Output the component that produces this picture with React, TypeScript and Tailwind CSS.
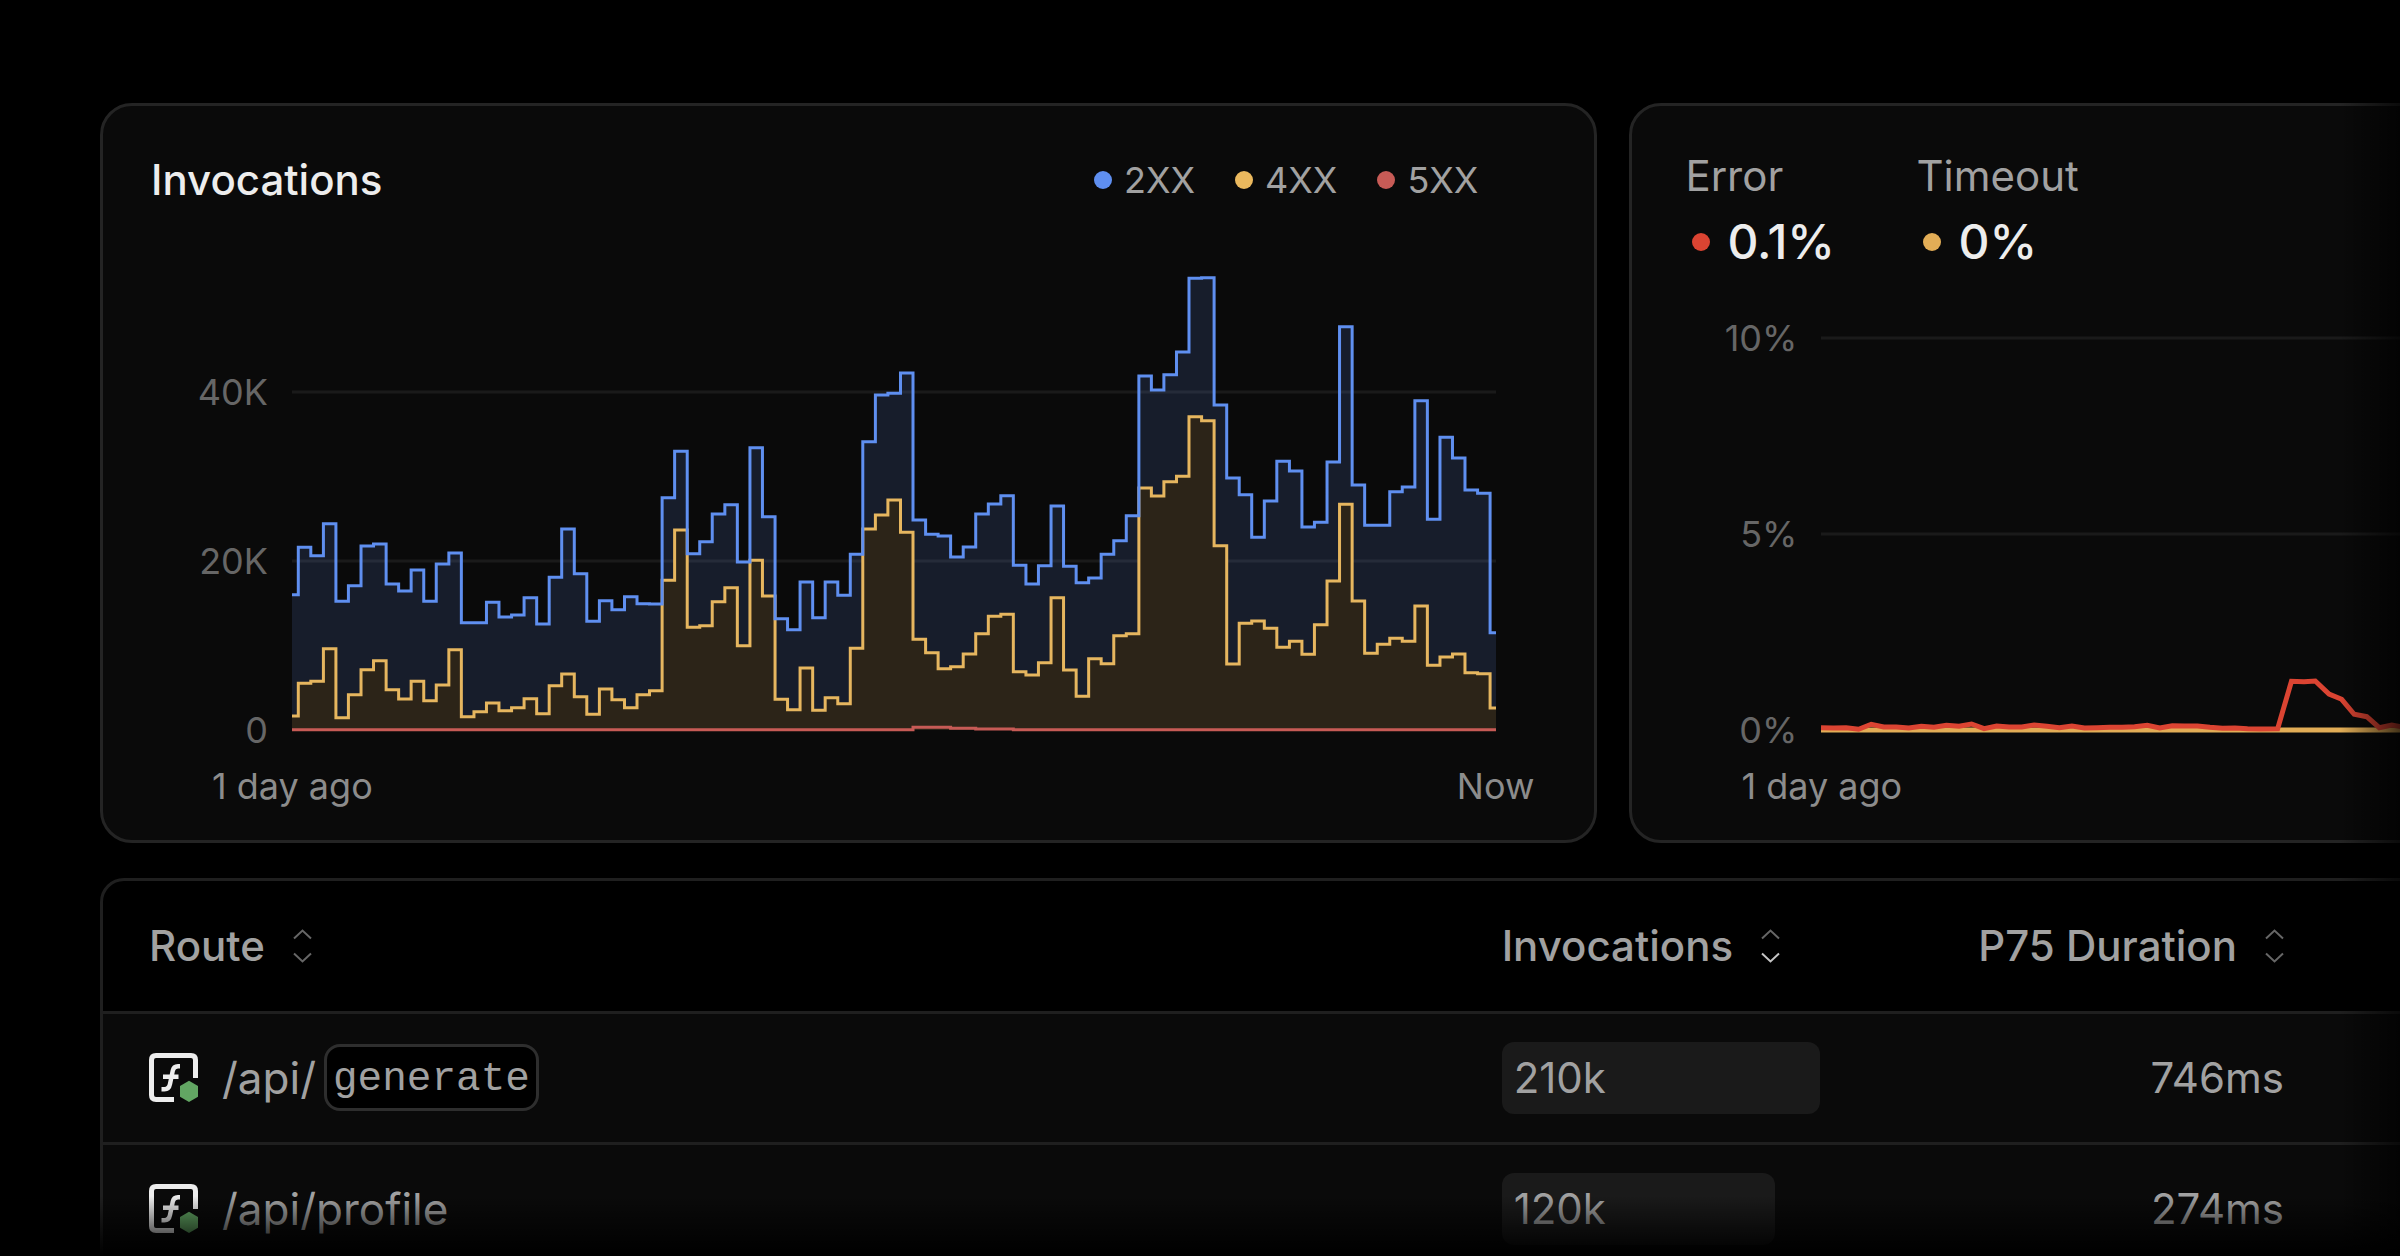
import type { ReactNode } from "react";

// Request counts are stored in plot units: 506 units span 20K requests.
const UNITS_PER_PX = 3;
const PLOT_W = 1204;
const PLOT_H = 480;
const BASE_Y = 460;

const total = [
  406, 548, 523, 619, 386, 433, 552, 558, 438, 417, 480, 386, 498, 531, 322, 322, 383, 339, 345, 397,
  318, 458, 603, 469, 326, 388, 361, 400, 379, 378, 697, 836, 529, 565, 648, 676, 504, 847, 640, 334,
  301, 444, 337, 444, 404, 527, 865, 1005, 1010, 1071, 630, 587, 582, 519, 549, 648, 678, 703, 494, 438,
  493, 672, 491, 442, 456, 527, 568, 643, 1062, 1020, 1066, 1134, 1355, 1357, 975, 756, 706, 578, 687, 806,
  777, 609, 623, 804, 1210, 735, 614, 614, 715, 729, 988, 632, 878, 816, 720, 710, 292,
];

const clientErrors = [
  42, 140, 146, 244, 37, 106, 181, 208, 121, 93, 146, 88, 135, 241, 40, 55, 81, 58, 67, 94,
  49, 133, 168, 100, 47, 123, 91, 67, 106, 118, 449, 600, 308, 313, 385, 427, 253, 509, 402, 92,
  61, 186, 59, 97, 79, 245, 603, 645, 690, 593, 272, 232, 184, 190, 228, 289, 341, 347, 175, 165,
  202, 397, 180, 101, 214, 199, 283, 289, 726, 702, 745, 761, 940, 928, 553, 198, 320, 327, 305, 248,
  266, 227, 316, 447, 677, 387, 230, 257, 275, 266, 372, 194, 219, 228, 172, 169, 66,
];

const serverErrors = total.map((_, i) => {
  if (i >= 50 && i <= 52) return 8;
  if (i >= 53 && i <= 54) return 5;
  if (i >= 55 && i <= 57) return 3;
  return 1;
});

// Error rate as [sample position, height] pairs.
const errorRate: [number, number][] = [
  [0, 7], [1, 6], [2, 7], [3, 2], [4, 17], [5, 9], [6, 9], [7, 6], [8, 11], [9, 8],
  [10, 14], [11, 11], [12, 18], [13, 4], [14, 12], [15, 9], [16, 9], [17, 15], [18, 11], [19, 7],
  [20, 12], [21, 6], [22, 7], [23, 8], [24, 8], [25, 10], [26, 14], [27, 6], [28, 13], [29, 12],
  [30, 12], [31, 8], [32, 5], [33, 6], [34, 4], [35, 3], [36.4, 4], [37.5, 146], [38.5, 145], [39.4, 147],
  [40.5, 108], [41.5, 92], [42.5, 47], [43.5, 40], [44.5, 7], [45.5, 15], [46.5, 8], [48, 8],
];

function stepPath(values: number[]) {
  const step = PLOT_W / (values.length - 1);
  const y = (v: number) => (BASE_Y - v / UNITS_PER_PX).toFixed(1);
  let d = `M0 ${y(values[0])}`;
  values.slice(1).forEach((v, i) => {
    d += `H${((i + 0.5) * step).toFixed(1)}V${y(v)}`;
  });
  return `${d}H${PLOT_W}`;
}

function linePath(points: [number, number][]) {
  return (
    "M" +
    points.map(([i, v]) => `${((i * PLOT_W) / 96).toFixed(1)} ${(BASE_Y - v / UNITS_PER_PX).toFixed(1)}`).join("L")
  );
}

const areaOf = (d: string) => `${d}V${BASE_Y}H0Z`;

function Plot({ label, children }: { label: string; children: ReactNode }) {
  return (
    <svg
      role="img"
      aria-label={label}
      viewBox={`0 0 ${PLOT_W} ${PLOT_H}`}
      preserveAspectRatio="none"
      className="h-[480px] min-w-0 flex-1"
      fill="none"
    >
      {children}
    </svg>
  );
}

function Dot({ className }: { className: string }) {
  return <span className={`size-[18px] shrink-0 rounded-full ${className}`} />;
}

function Dates({ end }: { end?: string }) {
  return (
    <div className="mt-[14px] flex justify-between pr-[60px] pl-[109px] text-[36px] leading-[44px] text-[#8c8c8c]">
      <span>1 day ago</span>
      {end && <span>{end}</span>}
    </div>
  );
}

function Card({ children }: { children: ReactNode }) {
  return (
    <section className="rounded-[32px] border-[3px] border-[#242424] bg-[#0a0a0a] pb-8">{children}</section>
  );
}

function InvocationsCard() {
  const blue = stepPath(total);
  const amber = stepPath(clientErrors);
  const legend = [
    { name: "2XX", dot: "bg-[#5f8ff0]" },
    { name: "4XX", dot: "bg-[#ebb95e]" },
    { name: "5XX", dot: "bg-[#c75b56]" },
  ];
  return (
    <Card>
      <header className="flex h-[164px] items-start justify-between pt-[52px] pr-[116px] pl-12">
        <h2 className="text-[42px] leading-[44px] font-medium text-[#ededed]">Invocations</h2>
        <ul className="flex gap-10 text-[36px] leading-[44px] text-[#a1a1a1]">
          {legend.map((l) => (
            <li key={l.name} className="flex items-center gap-3">
              <Dot className={l.dot} />
              {l.name}
            </li>
          ))}
        </ul>
      </header>
      <div className="flex items-end gap-6 pr-[98px] pl-12">
        <div className="flex h-[378px] w-[117px] flex-col justify-between text-right text-[36px] leading-[40px] text-[#666]">
          <span>40K</span>
          <span>20K</span>
          <span>0</span>
        </div>
        <Plot label="Invocations over the last day">
          <path d={`M0 122H${PLOT_W}M0 291H${PLOT_W}`} stroke="#1a1a1a" strokeWidth="3" />
          <path d={areaOf(blue)} fill="#6690e8" fillOpacity="0.15" />
          <path d={areaOf(amber)} fill="#2c2418" />
          <path d={amber} stroke="#e6b65f" strokeWidth="3" />
          <path d={blue} stroke="#5f8ff0" strokeWidth="3" />
          <path d={stepPath(serverErrors)} stroke="#c75b56" strokeWidth="3" />
        </Plot>
      </div>
      <Dates end="Now" />
    </Card>
  );
}

function ErrorsCard() {
  const stats = [
    { name: "Error", value: "0.1%", dot: "bg-[#db4432]" },
    { name: "Timeout", value: "0%", dot: "bg-[#e2ad56]" },
  ];
  return (
    <Card>
      <dl className="flex h-[164px] items-start pt-12 pl-[53px]">
        {stats.map((s) => (
          <div key={s.name} className="w-[231px] shrink-0">
            <dt className="text-[42px] leading-[44px] text-[#a1a1a1]">{s.name}</dt>
            <dd className="mt-4 flex items-center gap-[17px] pl-[7px] text-[48px] leading-[56px] font-medium text-[#ededed]">
              <Dot className={s.dot} />
              {s.value}
            </dd>
          </div>
        ))}
      </dl>
      <div className="flex items-end gap-6 pr-[98px] pl-12">
        <div className="flex h-[432px] w-[117px] flex-col justify-between text-right text-[36px] leading-[40px] text-[#666]">
          <span>10%</span>
          <span>5%</span>
          <span>0%</span>
        </div>
        <Plot label="Error and timeout rate over the last day">
          <path d={`M0 68H${PLOT_W}M0 264H${PLOT_W}`} stroke="#1a1a1a" strokeWidth="3" />
          <path d={`M0 460H${PLOT_W}`} stroke="#e2ad56" strokeWidth="5" />
          <path d={linePath(errorRate)} stroke="#db4432" strokeWidth="5" />
        </Plot>
      </div>
      <Dates />
    </Card>
  );
}

function SortButton({ children, sorted = false }: { children: string; sorted?: boolean }) {
  return (
    <button type="button" className="inline-flex items-center gap-7 font-medium">
      {children}
      <svg width="19" height="34" viewBox="0 0 19 34" fill="none" strokeWidth="2" aria-hidden="true">
        <path d="M1 9.5L9.5 1.5L18 9.5" stroke="#666" />
        <path d="M1 24.5L9.5 32.5L18 24.5" stroke={sorted ? "#c4c4c4" : "#666"} />
      </svg>
    </button>
  );
}

function FunctionIcon() {
  return (
    <svg width="49" height="49" viewBox="0 0 49 49" fill="none" className="shrink-0" aria-hidden="true">
      <path
        d="M25 46.5H7Q2.5 46.5 2.5 42V7Q2.5 2.5 7 2.5H42Q46.5 2.5 46.5 7V25"
        stroke="#ededed"
        strokeWidth="5"
      />
      <path
        d="M31 13.2H29Q24.6 13.2 23.8 17.5L21 31Q20 36.2 15.5 36.2H12.5M14 23.7H29.5"
        stroke="#ededed"
        strokeWidth="4.4"
      />
      <path d="M40 27.7L49 33V43.7L40 49L31 43.7V33Z" fill="#62a663" />
    </svg>
  );
}

const routes = [
  { prefix: "/api/", name: "generate", boxed: true, count: "210k", share: 81, duration: "746ms" },
  { prefix: "/api/", name: "profile", boxed: false, count: "120k", share: 69.5, duration: "274ms" },
];

function RoutesTable() {
  return (
    <div className="mt-[35px] overflow-hidden rounded-t-[24px] border-[3px] border-[#1f1f1f]">
      <table className="w-full table-fixed text-[42px] leading-[48px] text-[#a1a1a1]">
        <colgroup>
          <col className="w-[46.3%]" />
          <col className="w-[13%]" />
          <col className="w-[12.9%]" />
          <col />
        </colgroup>
        <thead>
          <tr className="h-[131px] border-b-[3px] border-[#1f1f1f]">
            <th scope="col" className="pl-[46px] text-left font-medium">
              <SortButton>Route</SortButton>
            </th>
            <th scope="col" className="text-left font-medium">
              <SortButton sorted>Invocations</SortButton>
            </th>
            <th scope="col" className="text-right font-medium whitespace-nowrap">
              <SortButton>P75 Duration</SortButton>
            </th>
            <td />
          </tr>
        </thead>
        <tbody className="bg-[#0a0a0a]">
          {routes.map((r) => (
            <tr key={r.name} className="h-[131px] border-b-[3px] border-[#1f1f1f]">
              <td className="pl-[46px] text-[44px]">
                <div className="flex items-center gap-6">
                  <FunctionIcon />
                  <span className="flex items-center">
                    {r.prefix}
                    {r.boxed ? (
                      <code className="ml-2 rounded-2xl border-[3px] border-[#2e2e2e] bg-black px-[6px] pt-[6px] pb-[2px] font-['Liberation_Mono',monospace] text-[41px] leading-[53px]">
                        {r.name}
                      </code>
                    ) : (
                      r.name
                    )}
                  </span>
                </div>
              </td>
              <td>
                <div className="rounded-xl bg-[#1a1a1a] px-3 py-3" style={{ width: `${r.share}%` }}>
                  {r.count}
                </div>
              </td>
              <td className="text-right">{r.duration}</td>
              <td />
            </tr>
          ))}
        </tbody>
      </table>
    </div>
  );
}

export default function App() {
  return (
    <main className="relative h-screen overflow-hidden bg-black pt-[103px] pl-[100px] font-['Inter',sans-serif]">
      <div className="w-[131.6%]">
        <div className="grid grid-cols-2 gap-8">
          <InvocationsCard />
          <ErrorsCard />
        </div>
        <RoutesTable />
      </div>
      <div className="pointer-events-none absolute inset-y-0 right-0 w-[60px] bg-linear-to-r from-transparent to-black/70" />
      <div className="pointer-events-none absolute inset-x-0 bottom-0 h-[60px] bg-linear-to-b from-transparent to-black" />
    </main>
  );
}
